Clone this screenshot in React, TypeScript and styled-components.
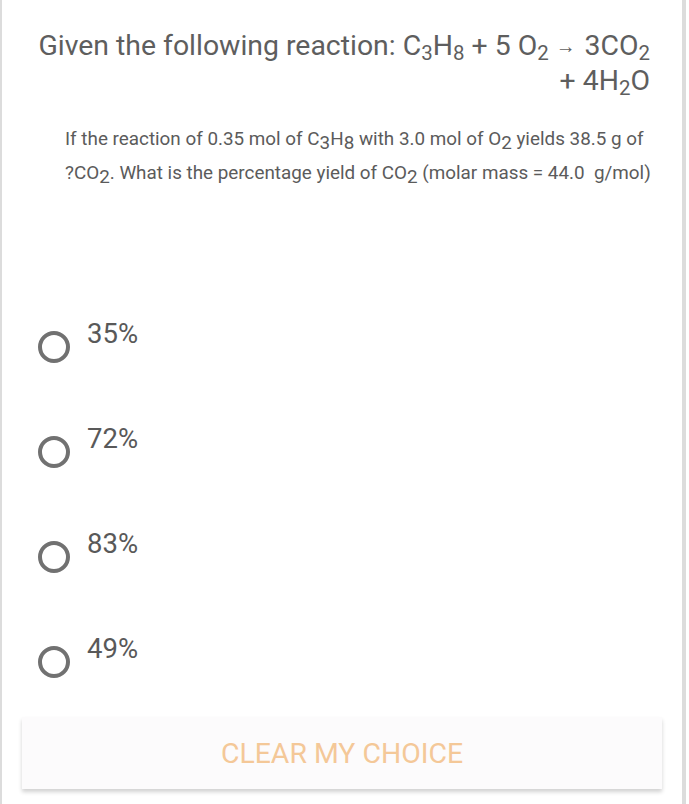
import * as React from 'react';
import styled, { createGlobalStyle } from 'styled-components';

const GlobalStyle = createGlobalStyle`
  html, body {
    margin: 0;
    padding: 0;
    background: #ffffff;
  }
  body {
    font-family: Roboto, 'Liberation Sans', sans-serif;
    color: #5b5b5b;
  }
`;

const Page = styled.div`
  box-sizing: border-box;
  width: 686px;
  min-height: 804px;
  border-left: 2px solid #dcdcdc;
  border-right: 4px solid #dcdcdc;
  display: flex;
  flex-direction: column;
`;

const Question = styled.div`
  padding: 29px 32px 0 30px;
`;

const Title = styled.h2`
  margin: 0;
  font-size: 28.4px;
  font-weight: 400;
  line-height: 34px;
  text-align: right;
  white-space: nowrap;
  color: #5e5e5e;
`;

const Sub = styled.sub`
  font-size: 0.72em;
  vertical-align: -0.25em;
  line-height: 0;
`;

const Arrow = styled.span`
  font-size: 0.7em;
  margin: 0 9px 0 7px;
  vertical-align: 0.1em;
`;

const Body = styled.div`
  margin-top: 24px;
  padding-left: 33px;
  font-size: 18.85px;
  line-height: 34px;
  color: #5b5b5b;
`;

const BodyLine = styled.div`
  white-space: nowrap;
`;

const Low = styled.span`
  display: inline-block;
  transform: translateY(4px);
`;

const Options = styled.div`
  margin-top: 130px;
  padding-left: 36px;
  display: flex;
  flex-direction: column;
  gap: 73px;
`;

const Option = styled.label`
  display: flex;
  align-items: flex-start;
  gap: 17px;
  height: 32px;
`;

const Radio = styled.span`
  box-sizing: border-box;
  flex: none;
  width: 32px;
  height: 32px;
  margin-top: 11px;
  border: 4px solid #717171;
  border-radius: 50%;
`;

const OptionText = styled.span`
  font-size: 27.5px;
  line-height: 27px;
  color: #595959;
`;

const ClearButton = styled.button`
  margin: 50px 20px 0 20px;
  height: 72px;
  border: none;
  background: #fcfbfc;
  box-shadow: 0 3px 4px rgba(0, 0, 0, 0.18);
  font-family: Roboto, 'Liberation Sans', sans-serif;
  font-size: 28.4px;
  color: #f4c898;
  text-transform: uppercase;
`;

const options = ['35%', '72%', '83%', '49%'];

export default function App() {
  return (
    <>
      <GlobalStyle />
      <Page>
        <Question>
          <Title>
            Given the following reaction: C<Sub>3</Sub>H<Sub>8</Sub> + 5 O<Sub>2</Sub>
            <Arrow>→</Arrow>3CO<Sub>2</Sub>
            <br />+ 4H<Sub>2</Sub>O
          </Title>
          <Body>
            <BodyLine>
              If the reaction of 0.35 mol of C<Low>3</Low>H<Low>8</Low> with 3.0 mol of O<Low>2</Low> yields 38.5 g of
            </BodyLine>
            <BodyLine>
              ?CO<Low>2</Low>. What is the percentage yield of CO<Low>2</Low> (molar mass = 44.0&nbsp; g/mol)
            </BodyLine>
          </Body>
        </Question>
        <Options>
          {options.map((o) => (
            <Option key={o}>
              <Radio />
              <OptionText>{o}</OptionText>
            </Option>
          ))}
        </Options>
        <ClearButton type="button">Clear my choice</ClearButton>
      </Page>
    </>
  );
}
